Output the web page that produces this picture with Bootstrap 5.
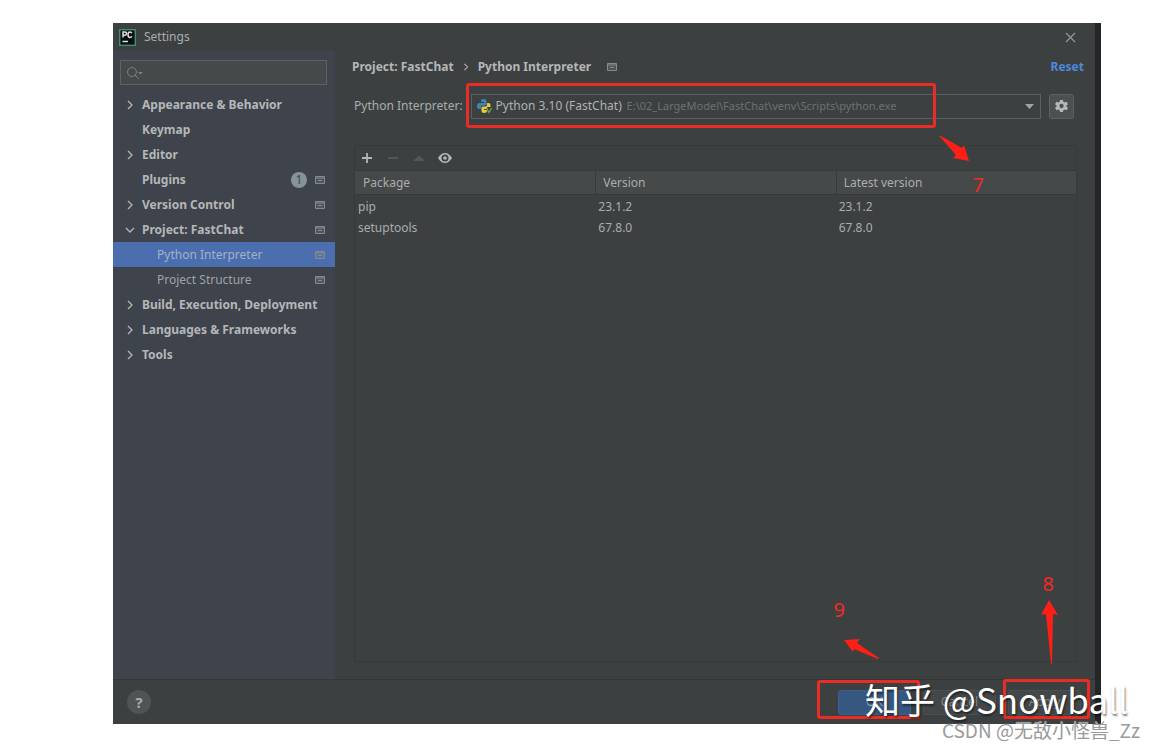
<!DOCTYPE html>
<html lang="en">
<head>
<meta charset="utf-8">
<meta name="viewport" content="width=device-width, initial-scale=1">
<title>Settings</title>
<link rel="stylesheet" href="https://cdn.jsdelivr.net/npm/bootstrap@5.3.0/dist/css/bootstrap.min.css">
<style>
  body { background: #fff; color: #aaadae; font: 12px/16px "Noto Sans", "Noto Sans CJK SC", sans-serif; }
  .page { padding: 23px 55px 25px 113px; }
  .dialog { background: #3c4041; border-right: 6px solid #232526; }
  .titlebar { height: 28px; padding: 0 19px 0 6px; }
  .sidebar { width: 222px; background: #3f434b; padding-top: 9px; }
  .search { height: 25px; margin: 0 8px 7px 7px; border: 1px solid #5d6264; background: #45494a; padding: 0 5px; }
  .search input { background: none; border: 0; outline: 0; color: inherit; min-width: 0; }
  .tree a { height: 25px; padding: 0 10px 0 12px; color: #b4b7b9; font-weight: 700; text-decoration: none; white-space: nowrap; }
  .tree .twisty { width: 17px; flex: none; }
  .tree .child { padding-left: 44px; font-weight: 400; color: #9fa3a7; }
  .tree .current { background: #4b6eaf; color: #a3b1c9; }
  .proj { color: #858b8e; flex: none; }
  .count { width: 16px; height: 16px; border-radius: 8px; background: #87929a; color: #3f434b; }
  .pane { padding: 0 18px 17px 19px; }
  .crumbs { height: 32px; font-weight: 700; color: #b4b7b9; margin: 0 -7px 0 -2px; }
  .crumbs a { color: #4f87dc; text-decoration: none; }
  .field { margin: 10px 3px 26px 0; height: 26px; }
  .combo { border: 1px solid #5a5f60; height: 25px; padding: 0 6px 0 4px; }
  .combo select { appearance: none; background: none; border: 0; padding: 0; color: #b0b3b4; outline: 0; }
  .combo .path { color: #6c7173; font-size: 11px; }
  .plainbtn { background: none; border: 0; padding: 0; color: inherit; display: flex; }
  .gear { width: 25px; height: 25px; background: #4b5052; border: 1px solid #5b6061; border-radius: 3px; align-items: center; justify-content: center; }
  .packages { border: 1px solid #363a3b; }
  .toolbar { height: 24px; padding: 0 5px; gap: 12px; }
  .packages table { table-layout: fixed; border-collapse: separate; border-spacing: 0; }
  .packages th { height: 25px; padding: 0 8px; font-weight: 400; background: #45494a; border-top: 1px solid #363a3b; border-bottom: 1px solid #363a3b; }
  .packages th + th { border-left: 1px solid #363a3b; padding-left: 7px; }
  .packages td { height: 21px; padding: 0 3px; }
  .packages tbody::before { content: ""; display: block; height: 1px; }
  .footer { height: 45px; border-top: 1px solid #333738; padding: 0 14px; }
  .help { width: 24px; height: 24px; border-radius: 12px; background: #505455; font-size: 15px; font-weight: 700; align-items: center; justify-content: center; }
  .action { width: 73px; height: 25px; border: 1px solid #4b5051; border-radius: 3px; background: #434748; color: #858989; padding: 0; }
  .action.default { background: #365880; border-color: #3b608b; color: #8fa5bd; }
  .ring, .mark-no, .arrow, .stamp { position: absolute; pointer-events: none; }
  .ring { border: 3px solid #e92d25; border-radius: 3px; }
  .mark-no { color: #f02b22; font-size: 20px; line-height: 24px; }
  .arrow { fill: #ff1f16; }
  .ring-field { inset: -11px 105px -9px -5px; }
  .ring-ok { left: -21px; top: -10px; width: 103px; height: 39px; }
  .ring-apply { left: -5px; top: -11px; width: 87px; height: 40px; }
  .no7 { right: 111px; top: 150px; } .ar7 { right: 125px; top: 112px; }
  .no8 { right: 41px; bottom: 128px; } .ar8 { right: 35px; bottom: 59px; }
  .no9 { right: 250px; bottom: 102px; } .ar9 { right: 214px; bottom: 64px; }
  .stamp { white-space: nowrap; }
  .zhihu { right: -33px; bottom: 5px; color: #fff; font: 35px/40px "Noto Sans CJK SC", sans-serif; text-shadow: 1px 2px 2px rgba(0,0,0,.5); }
  .csdn { right: -45px; bottom: -18px; color: #9a9a9a; font: 19px/24px "Noto Sans CJK SC", sans-serif; text-shadow: 0 0 1px #fff; }
</style>
</head>
<body>
<svg class="d-none" xmlns="http://www.w3.org/2000/svg">
  <symbol id="proj" viewBox="0 0 10 10"><path d="M.5 1.500h9v7h-9z" fill="currentColor" fill-opacity=".25" stroke="currentColor"/><path d="M1 3h8M3 5.500h4" fill="none" stroke="currentColor"/></symbol>
  <symbol id="right" viewBox="0 0 10 10"><path d="M3 1l4 4-4 4" fill="none" stroke="currentColor" stroke-width="1.300"/></symbol>
  <symbol id="down" viewBox="0 0 10 10"><path d="M1 3l4 4 4-4" fill="none" stroke="currentColor" stroke-width="1.300"/></symbol>
</svg>
<div class="page d-flex min-vh-100">
  <div class="dialog flex-grow-1 d-flex flex-column position-relative">
    <header class="titlebar d-flex align-items-center">
      <svg width="17" height="17" viewBox="0 0 17 17" class="me-1"><rect x=".7" y=".7" width="15.600" height="15.600" fill="#0b0f0e" stroke="#3f8f78" stroke-width="1.400"/><path d="M4 8.500V3h2q1.500 0 1.500 1.600T6 6.200H4M12.800 4.200Q12.300 3 11 3 9 3 9 5.700t2 2.700q1.300 0 1.800-1.200M3.500 12.500H9" fill="none" stroke="#ddd" stroke-width="1.500"/></svg>
      <span class="ms-1 flex-grow-1">Settings</span>
      <button class="plainbtn" aria-label="Close"><svg width="11" height="11"><path d="M1 1l9 9M10 1L1 10" stroke="#999c9d" stroke-width="1.100"/></svg></button>
    </header>
    <div class="d-flex flex-grow-1">
      <nav class="sidebar flex-shrink-0">
        <div class="search d-flex align-items-center">
          <svg width="18" height="14" viewBox="0 0 18 14" fill="none" stroke="#7d8183"><circle cx="6" cy="6" r="4.500"/><path d="M9 9l4 4"/><path d="M12 6h5l-2.500 2.500z" fill="#7d8183" stroke="none"/></svg>
          <input class="flex-grow-1" type="search" aria-label="Search settings">
        </div>
        <div class="tree">
          <a href="#" class="d-flex align-items-center"><span class="twisty d-flex"><svg width="10" height="10"><use href="#right"/></svg></span>Appearance &amp; Behavior</a>
          <a href="#" class="d-flex align-items-center"><span class="twisty"></span>Keymap</a>
          <a href="#" class="d-flex align-items-center"><span class="twisty d-flex"><svg width="10" height="10"><use href="#right"/></svg></span>Editor</a>
          <a href="#" class="d-flex align-items-center"><span class="twisty"></span><span class="flex-grow-1">Plugins</span><span class="count text-center me-2 fw-normal">1</span><svg class="proj" width="10" height="10"><use href="#proj"/></svg></a>
          <a href="#" class="d-flex align-items-center"><span class="twisty d-flex"><svg width="10" height="10"><use href="#right"/></svg></span><span class="flex-grow-1">Version Control</span><svg class="proj" width="10" height="10"><use href="#proj"/></svg></a>
          <a href="#" class="d-flex align-items-center"><span class="twisty d-flex"><svg width="10" height="10"><use href="#down"/></svg></span><span class="flex-grow-1">Project: FastChat</span><svg class="proj" width="10" height="10"><use href="#proj"/></svg></a>
          <a href="#" class="child current d-flex align-items-center" aria-current="page"><span class="flex-grow-1">Python Interpreter</span><svg class="proj" width="10" height="10"><use href="#proj"/></svg></a>
          <a href="#" class="child d-flex align-items-center"><span class="flex-grow-1">Project Structure</span><svg class="proj" width="10" height="10"><use href="#proj"/></svg></a>
          <a href="#" class="d-flex align-items-center"><span class="twisty d-flex"><svg width="10" height="10"><use href="#right"/></svg></span>Build, Execution, Deployment</a>
          <a href="#" class="d-flex align-items-center"><span class="twisty d-flex"><svg width="10" height="10"><use href="#right"/></svg></span>Languages &amp; Frameworks</a>
          <a href="#" class="d-flex align-items-center"><span class="twisty d-flex"><svg width="10" height="10"><use href="#right"/></svg></span>Tools</a>
        </div>
      </nav>
      <main class="pane flex-grow-1 d-flex flex-column">
        <div class="crumbs d-flex align-items-center">
          <span>Project: FastChat</span><svg width="8" height="8" class="mx-2"><use href="#right"/></svg><span>Python Interpreter</span>
          <svg width="10" height="10" class="proj ms-3"><use href="#proj"/></svg><a href="#" class="ms-auto">Reset</a>
        </div>
        <div class="field d-flex align-items-center">
          <label for="interp" class="flex-shrink-0 me-2">Python Interpreter:</label>
          <div class="position-relative flex-grow-1 d-flex align-items-center">
            <div class="combo flex-grow-1 d-flex align-items-center">
              <svg width="16" height="16" viewBox="0 0 16 16" class="me-1"><path d="M7.500 1C5 1 5 2 5 4h3v1H3.500C1.500 5 1 6.500 1 8s.5 3 2 3H5V9q0-1.500 1.500-1.500H9Q10.500 7.500 10.500 6V3Q10.500 1 7.500 1z" fill="#3c86b5"/><path d="M8 15c2.500 0 3-1 3-3H8v-1h4c2 0 2.500-1 2.500-3S14 5 12.500 5H11v2q0 1.500-1.500 1.500H7Q5.500 8.500 5.500 10v3Q5.500 15 8 15z" fill="#e6cc3a"/><path d="M11 9h5v6h-3z" fill="#3c4041"/><path d="M10.500 10l2.500 4.500L15.500 10" fill="none" stroke="#6fa844" stroke-width="1.300"/></svg>
              <select id="interp"><option>Python 3.10 (FastChat)</option></select>
              <span class="path ms-1 flex-grow-1">E:\02_LargeModel\FastChat\venv\Scripts\python.exe</span>
              <svg width="9" height="5"><path d="M0 0h9L4.500 5z" fill="#a0a4a5"/></svg>
            </div>
            <span class="ring ring-field"></span>
          </div>
          <button class="plainbtn gear ms-2" aria-label="Interpreter settings"><svg width="13" height="14" viewBox="-7 -7 14 14"><path d="M-1.500-6.500h3L2-4.500l1.500.8 2-.8L7-2 5.400-.8v1.600L7 2 5.500 4.500l-2-.8-1.500.8-.5 2h-3l-.5-2-1.500-.8-2 .8L-7 2l1.600-1.200V-.8L-7-2l1.500-2.500 2 .8 1.500-.8zM0-2.300A2.300 2.300 0 1 0 0 2.300 2.300 2.300 0 1 0 0-2.300z" fill="#b4b8b9" fill-rule="evenodd"/></svg></button>
        </div>
        <section class="packages flex-grow-1 ms-0">
          <div class="toolbar d-flex align-items-center">
            <button class="plainbtn" aria-label="Install package"><svg width="14" height="14"><path d="M7 2v10M2 7h10" stroke="#b4b7b8" stroke-width="1.800"/></svg></button>
            <button class="plainbtn" aria-label="Uninstall package"><svg width="14" height="14"><path d="M2 7h10" stroke="#565b5d" stroke-width="1.800"/></svg></button>
            <button class="plainbtn" aria-label="Upgrade package"><svg width="14" height="14"><path d="M1 10h12L7 4.500z" fill="#535759"/></svg></button>
            <button class="plainbtn" aria-label="Show early releases"><svg width="14" height="14" viewBox="0 0 14 14"><path d="M0 7Q3 2 7 2t7 5q-3 5-7 5T0 7z" fill="#b4b7b8"/><circle cx="7" cy="7" r="3.500" fill="#3c4041"/><circle cx="7" cy="7" r="1.800" fill="#b4b7b8"/></svg></button>
          </div>
          <table class="w-100">
            <thead><tr><th>Package</th><th>Version</th><th>Latest version</th></tr></thead>
            <tbody><tr><td>pip</td><td>23.1.2</td><td>23.1.2</td></tr><tr><td>setuptools</td><td>67.8.0</td><td>67.8.0</td></tr></tbody>
          </table>
        </section>
      </main>
    </div>
    <footer class="footer d-flex align-items-center">
      <button class="plainbtn help me-auto" aria-label="Help">?</button>
      <div class="d-flex gap-2">
        <div class="position-relative me-1"><button class="action default">OK</button><span class="ring ring-ok"></span></div>
        <div class="me-1"><button class="action">Cancel</button></div>
        <div class="position-relative"><button class="action">Apply</button><span class="ring ring-apply"></span></div>
      </div>
    </footer>
    <span class="mark-no no7">7</span>
    <svg class="arrow ar7" width="32" height="28"><path d="M3 3L1 1l2-0L24 13l2-3 5 16-16-3 3-3z"/></svg>
    <span class="mark-no no8">8</span>
    <svg class="arrow ar8" width="20" height="66"><path d="M9 1l9 15-5-1-1 50h-1L6 15l-5 1z"/></svg>
    <span class="mark-no no9">9</span>
    <svg class="arrow ar9" width="38" height="22"><path d="M1 2l16-1-3 4 22 15-1 1-24-10-1 3z"/></svg>
    <span class="stamp zhihu">知乎 @Snowball</span>
    <span class="stamp csdn">CSDN @无敌小怪兽_Zz</span>
  </div>
</div>
<script src="https://cdn.jsdelivr.net/npm/bootstrap@5.3.0/dist/js/bootstrap.bundle.min.js"></script>
</body>
</html>
